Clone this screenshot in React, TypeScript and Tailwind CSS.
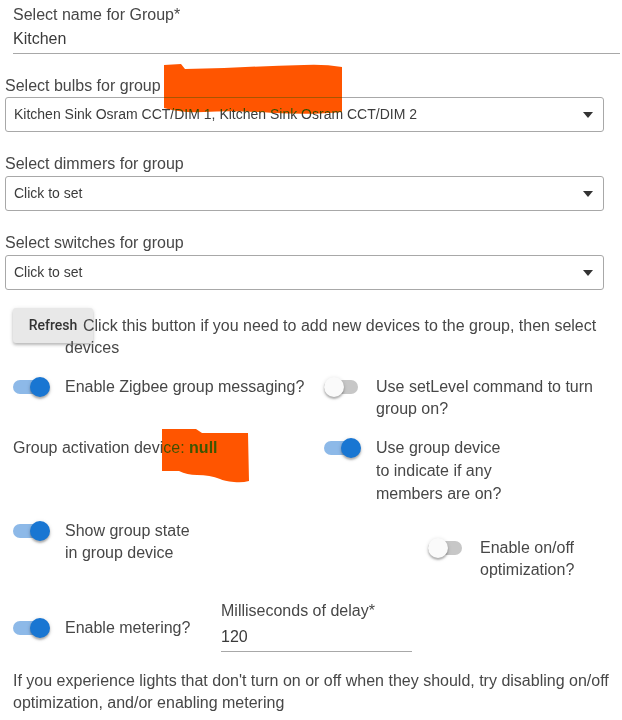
import React from "react";

function Toggle({ on }: { on: boolean }) {
  return (
    <div className="relative w-[34px] h-[14px] shrink-0">
      <div className={`absolute inset-0 rounded-full ${on ? "bg-[#8db9e8]" : "bg-[#c7c7c7]"}`} />
      <div
        className={`absolute top-[-3px] w-[20px] h-[20px] rounded-full shadow-[0_2px_2px_rgba(0,0,0,0.25),0_1px_4px_rgba(0,0,0,0.15)] ${
          on ? "left-[17px] bg-[#1976d2]" : "left-[0px] bg-[#fafafa]"
        }`}
      />
    </div>
  );
}

function SwitchField({ on, children }: { on: boolean; children: React.ReactNode }) {
  return (
    <div className="flex items-start">
      <div className="w-[52px] h-[22px] flex items-center shrink-0">
        <Toggle on={on} />
      </div>
      <div className="leading-[22px]">{children}</div>
    </div>
  );
}

function SelectBox({ value }: { value: string }) {
  return (
    <div className="h-[35px] w-[599px] border border-[#a8a8a8] rounded-[3px] flex items-center pl-[8px] pr-[10px]">
      <span className="flex-1 text-[14px] text-[#3c3c3c]">{value}</span>
      <span className="w-0 h-0 border-l-[5px] border-r-[5px] border-t-[6px] border-l-transparent border-r-transparent border-t-[#333]" />
    </div>
  );
}

function Smudge({ className, d, w, h }: { className: string; d: string; w: number; h: number }) {
  return (
    <svg
      className={`absolute mix-blend-darken pointer-events-none ${className}`}
      width={w}
      height={h}
      viewBox={`0 0 ${w} ${h}`}
    >
      <path d={d} fill="#ff5500" />
    </svg>
  );
}

export default function App() {
  return (
    <div className="relative w-[622px] h-[720px] bg-white overflow-hidden font-['Liberation_Sans',Arial,sans-serif] text-[16px] text-[#474747]">
      {/* group name */}
      <div className="ml-[13px] mr-[2px] pt-[5px]">
        <div className="leading-[20px]">Select name for Group*</div>
        <div className="mt-[4px] leading-[20px] pb-[4px] border-b border-[#a8a8a8] text-[#3a3a3a]">Kitchen</div>
      </div>

      {/* device pickers */}
      <div className="ml-[5px]">
        <div className="mt-[22px] leading-[20px]">Select bulbs for group</div>
        <div className="mt-[1px]">
          <SelectBox value="Kitchen Sink Osram CCT/DIM 1, Kitchen Sink Osram CCT/DIM 2" />
        </div>
        <div className="mt-[22px] leading-[20px]">Select dimmers for group</div>
        <div className="mt-[2px]">
          <SelectBox value="Click to set" />
        </div>
        <div className="mt-[22px] leading-[20px]">Select switches for group</div>
        <div className="mt-[2px]">
          <SelectBox value="Click to set" />
        </div>
      </div>

      {/* refresh */}
      <div className="relative mt-[18px]">
        <button className="absolute left-[13px] top-0 w-[80px] h-[35px] rounded-[3px] bg-[#e8e8e8] shadow-[0_2px_3px_rgba(0,0,0,0.22),0_1px_5px_rgba(0,0,0,0.1)] font-['Roboto',sans-serif] font-medium text-[14px] text-[#333]">
          Refresh
        </button>
        <p className="relative pl-[65px] pr-[8px] pt-[7px] indent-[18px] leading-[22px]">
          Click this button if you need to add new devices to the group, then select devices
        </p>
      </div>

      {/* option switches */}
      <div className="mt-[17px] ml-[13px] grid grid-cols-[311px_1fr]">
        <SwitchField on>Enable Zigbee group messaging?</SwitchField>
        <SwitchField on={false}>
          Use setLevel command to turn
          <br />
          group on?
        </SwitchField>
      </div>

      <div className="mt-[16px] ml-[13px] grid grid-cols-[311px_1fr]">
        <div className="leading-[23px]">
          Group activation device: <span className="font-bold text-[#3d7a1c]">null</span>
        </div>
        <div className="flex items-start">
          <div className="w-[52px] h-[23px] flex items-center shrink-0">
            <Toggle on />
          </div>
          <div className="leading-[23px]">
            Use group device
            <br />
            to indicate if any
            <br />
            members are on?
          </div>
        </div>
      </div>

      <div className="mt-[15px] ml-[13px] grid grid-cols-[415px_1fr]">
        <SwitchField on>
          Show group state
          <br />
          in group device
        </SwitchField>
        <div className="pt-[17px]">
          <SwitchField on={false}>
            Enable on/off
            <br />
            optimization?
          </SwitchField>
        </div>
      </div>

      <div className="mt-[20px] ml-[13px] flex items-center">
        <div className="w-[208px] pt-[3px]">
          <SwitchField on>Enable metering?</SwitchField>
        </div>
        <div className="w-[191px]">
          <div className="leading-[20px]">Milliseconds of delay*</div>
          <div className="mt-[6px] leading-[20px] pb-[4px] border-b border-[#a8a8a8] text-[#3a3a3a]">120</div>
        </div>
      </div>

      <p className="mt-[18px] ml-[13px] mr-[4px] leading-[22px]">
        If you experience lights that don't turn on or off when they should, try disabling on/off optimization, and/or
        enabling metering
      </p>

      {/* redaction marks */}
      <Smudge
        className="left-[164px] top-[64px]"
        w={180}
        h={52}
        d="M0 1 L17 0 L21 5 L60 4 Q100 2 140 1 Q160 0 178 3 L178 48 Q150 51 110 49 Q70 46 40 48 Q15 49 0 44 Z"
      />
      <Smudge
        className="left-[162px] top-[429px]"
        w={90}
        h={58}
        d="M0 0 L34 0 L40 4 L86 4 L87 52 Q80 54 72 53 Q62 52 58 50 Q48 46 35 46 Q25 46 17 42 L0 42 Z"
      />
    </div>
  );
}
